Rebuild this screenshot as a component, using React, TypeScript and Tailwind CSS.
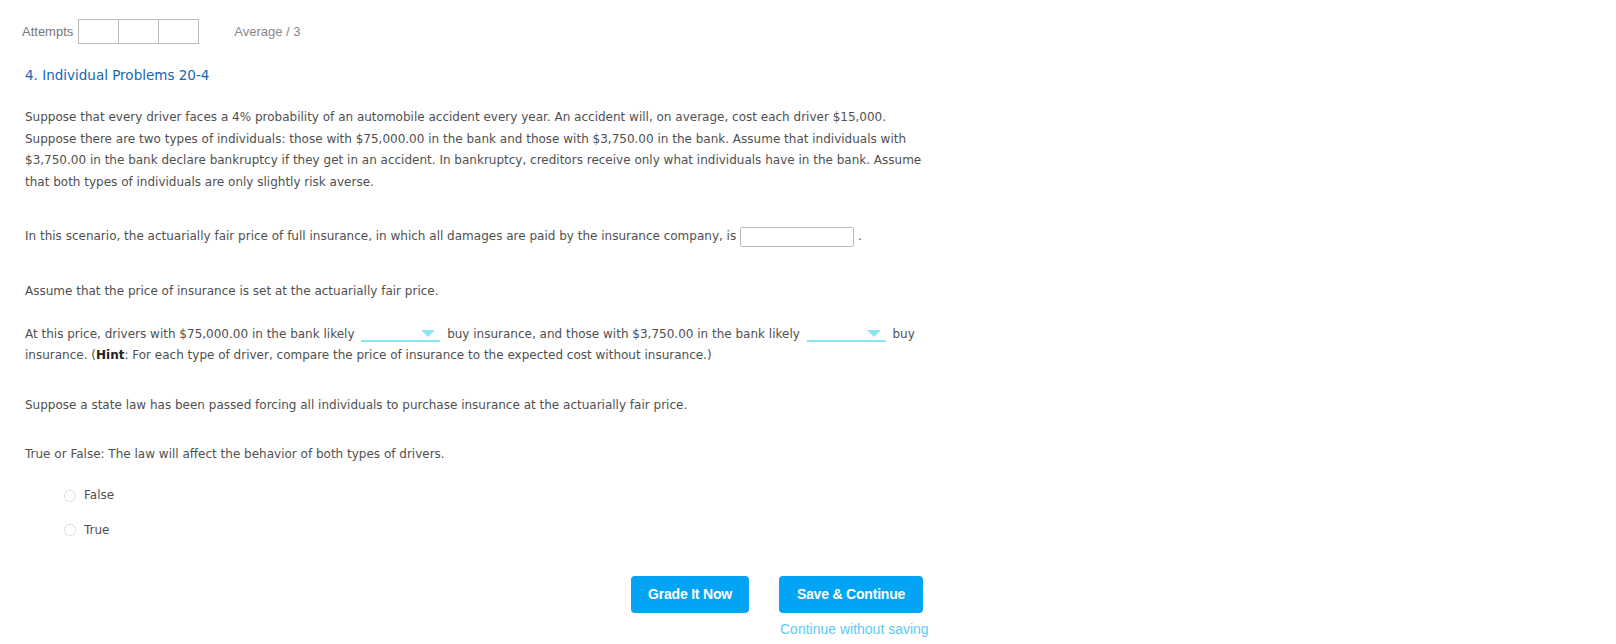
const body = "font-['DejaVu_Sans',sans-serif] text-[12px] leading-[21.6px] text-[#505050] whitespace-nowrap";

const Dropdown = () => (
  <span className="relative mx-[3px] inline-block h-[16px] w-[79px] border-b-2 border-[#8ae4f8] align-[-4px]">
    <span className="absolute right-[5px] top-[4px] h-0 w-0 border-x-[7px] border-t-[7px] border-x-transparent border-t-[#8ae4f8]" />
  </span>
);

const Radio = ({ label }: { label: string }) => (
  <label className="flex items-center gap-[8px]">
    <span className="inline-block h-[12px] w-[12px] rounded-full border border-dotted border-[#bbb]" />
    <span>{label}</span>
  </label>
);

const App = () => {
  return (
    <div className="min-h-[644px] w-[1616px] bg-white">
      <div className="flex items-center pl-[22px] pt-[19px] font-['Liberation_Sans',Arial,sans-serif] text-[13px] text-[#777]">
        <span className="mr-[5px]">Attempts</span>
        <div className="flex">
          <div className="h-[25px] w-[41px] border border-[#bbb]" />
          <div className="-ml-px h-[25px] w-[41px] border border-[#bbb]" />
          <div className="-ml-px h-[25px] w-[41px] border border-[#bbb]" />
        </div>
        <span className="ml-[35px] text-[#888]">Average / 3</span>
      </div>

      <h2 className="ml-[25px] mt-[20px] font-['DejaVu_Sans',sans-serif] text-[13.5px] leading-[22px] text-[#1a66b0]">
        4. Individual Problems 20-4
      </h2>

      <div className={`${body} ml-[25px]`}>
        <p className="mt-[21px]">
          Suppose that every driver faces a 4% probability of an automobile accident every year. An accident will, on average, cost each driver $15,000.
          <br />
          Suppose there are two types of individuals: those with $75,000.00 in the bank and those with $3,750.00 in the bank. Assume that individuals with
          <br />
          $3,750.00 in the bank declare bankruptcy if they get in an accident. In bankruptcy, creditors receive only what individuals have in the bank. Assume
          <br />
          that both types of individuals are only slightly risk averse.
        </p>

        <p className="mt-[33px]">
          In this scenario, the actuarially fair price of full insurance, in which all damages are paid by the insurance company, is{" "}
          <input className="inline-block h-[20px] w-[114px] rounded-[2px] border border-[#bbb] align-middle outline-none" />{" "}.
        </p>

        <p className="mt-[33px]">Assume that the price of insurance is set at the actuarially fair price.</p>

        <p className="mt-[21px]">
          At this price, drivers with $75,000.00 in the bank likely <Dropdown /> buy insurance, and those with $3,750.00 in the bank likely <Dropdown /> buy
          <br />
          insurance. (<b className="text-[#222]">Hint</b>: For each type of driver, compare the price of insurance to the expected cost without insurance.)
        </p>

        <p className="mt-[28px]">Suppose a state law has been passed forcing all individuals to purchase insurance at the actuarially fair price.</p>

        <p className="mt-[28px]">True or False: The law will affect the behavior of both types of drivers.</p>

        <div className="ml-[39px] mt-[19px] flex flex-col gap-[13px]">
          <Radio label="False" />
          <Radio label="True" />
        </div>
      </div>

      <div className="ml-[631px] mt-[35px] flex gap-[30px] font-['Liberation_Sans',Arial,sans-serif]">
        <button className="h-[37px] w-[118px] rounded-[4px] bg-[#03a4f4] text-[14px] font-bold tracking-[-0.2px] text-white">
          Grade It Now
        </button>
        <div className="flex w-[144px] flex-col items-start">
          <button className="h-[37px] w-[144px] rounded-[4px] bg-[#03a4f4] text-[14px] font-bold tracking-[-0.2px] text-white">
            Save &amp; Continue
          </button>
          <a className="ml-px mt-[8px] whitespace-nowrap text-[14px] leading-[16px] text-[#5ccaf7]">Continue without saving</a>
        </div>
      </div>
    </div>
  );
};

export default App;
